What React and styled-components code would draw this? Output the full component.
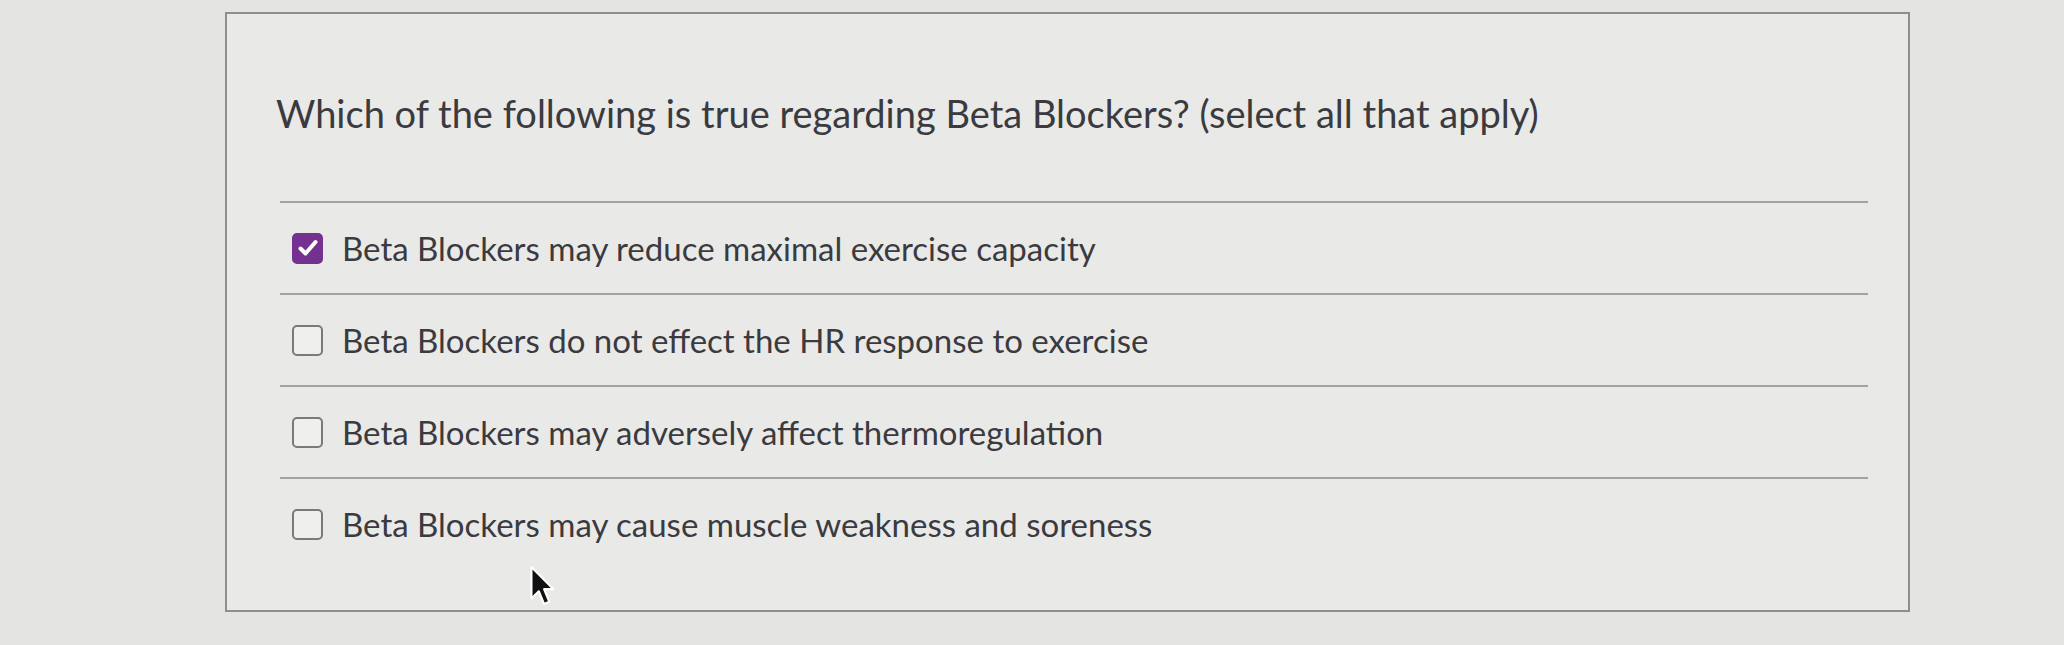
import styled, { createGlobalStyle } from 'styled-components';

const GlobalStyle = createGlobalStyle`
  html, body {
    margin: 0;
    padding: 0;
    background: #e4e4e2;
  }
  body {
    font-family: Lato, 'Liberation Sans', sans-serif;
  }
`;

const Page = styled.main`
  width: 2064px;
  height: 645px;
  box-sizing: border-box;
  padding: 12px 0 0 225px;
  background: #e4e4e2;
  overflow: hidden;
`;

const Panel = styled.section`
  position: relative;
  width: 1685px;
  height: 600px;
  box-sizing: border-box;
  border: 2px solid #8e8e8e;
  background: #e9e9e7;
  padding: 0 40px 0 53px;
`;

const Question = styled.h2`
  margin: 0 0 0 -4px;
  padding: 76px 0 0 0;
  height: 187px;
  box-sizing: border-box;
  font-family: Lato, 'Liberation Sans', sans-serif;
  font-weight: 400;
  font-size: 38px;
  line-height: 46px;
  color: #3a3a3f;
`;

const OptionList = styled.ul`
  list-style: none;
  margin: 0;
  padding: 0;
`;

const Option = styled.li`
  display: flex;
  align-items: center;
  gap: 19px;
  height: 90px;
  padding-left: 12px;
  border-top: 2px solid #a2a2a2;
  font-size: 33px;
  color: #3a3a3f;
`;

const Box = styled.span`
  flex: none;
  display: flex;
  align-items: center;
  justify-content: center;
  width: 31px;
  height: 31px;
  box-sizing: border-box;
  border-radius: 5px;
  background: ${(p) => (p.$checked ? '#74318f' : '#efefed')};
  border: 2px solid ${(p) => (p.$checked ? '#74318f' : '#7a7a7a')};
`;

const Cursor = styled.svg`
  position: absolute;
  left: 302px;
  top: 551px;
`;

const options = [
  { text: 'Beta Blockers may reduce maximal exercise capacity', checked: true },
  { text: 'Beta Blockers do not effect the HR response to exercise', checked: false },
  { text: 'Beta Blockers may adversely affect thermoregulation', checked: false },
  { text: 'Beta Blockers may cause muscle weakness and soreness', checked: false },
];

export default function App() {
  return (
    <Page>
      <GlobalStyle />
      <Panel>
        <Question>
          Which of the following is true regarding Beta Blockers? (select all that apply)
        </Question>
        <OptionList>
          {options.map((o) => (
            <Option key={o.text}>
              <Box $checked={o.checked}>
                {o.checked && (
                  <svg width="20" height="18" viewBox="0 0 20 18">
                    <path
                      d="M2.5 9.5 L7.5 14.5 L17.5 3"
                      fill="none"
                      stroke="#ffffff"
                      strokeWidth="4"
                      strokeLinecap="round"
                      strokeLinejoin="round"
                    />
                  </svg>
                )}
              </Box>
              {o.text}
            </Option>
          ))}
        </OptionList>
        <Cursor width="28" height="42" viewBox="0 0 26 40">
          <path
            d="M2 2 L2 32 L9 25 L14 37 L19 35 L14 23 L23 23 Z"
            fill="#111"
            stroke="#fff"
            strokeWidth="2"
            strokeLinejoin="round"
          />
        </Cursor>
      </Panel>
    </Page>
  );
}
